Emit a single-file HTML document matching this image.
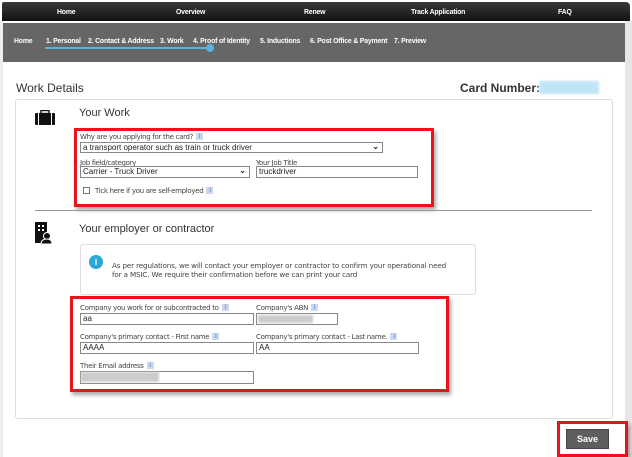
<!DOCTYPE html>
<html><head><style>
*{box-sizing:border-box;margin:0;padding:0}
body{width:632px;height:457px;position:relative;background:#fff;font-family:"Liberation Sans",sans-serif;overflow:hidden}
.a{position:absolute}
.t{font-size:7.5px;color:#fff;font-weight:bold;letter-spacing:-0.2px;white-space:nowrap}
.s{transform:scaleX(0.92);transform-origin:left}
.lbl{position:absolute;font-size:7px;color:#444;white-space:nowrap;font-family:"DejaVu Sans",sans-serif;letter-spacing:-0.3px}
.in{position:absolute;border:1px solid #888;background:#fff;font-size:8px;font-family:"Liberation Sans",sans-serif;color:#222;padding-left:2px;line-height:10px}
.i{display:inline-block;width:7px;height:7px;background:#c9d8ea;color:#36c;font-size:6px;line-height:7px;text-align:center;vertical-align:top;margin-left:3px}
.red{position:absolute;border:3px solid #e8141b;box-shadow:2px 3px 4px rgba(0,0,0,.35)}
.blur{position:absolute;background:#ccc;filter:blur(1px)}
</style></head><body>
<div class="a" style="left:2px;top:2px;width:628px;height:19px;background:linear-gradient(#3a3a3a,#111);border-radius:2px 4px 0 0"></div>
<div class="a t s" style="left:57px;top:7px">Home</div>
<div class="a t s" style="left:176px;top:7px">Overview</div>
<div class="a t s" style="left:304px;top:7px">Renew</div>
<div class="a t s" style="left:411px;top:7px">Track Application</div>
<div class="a t s" style="left:558px;top:7px">FAQ</div>
<div class="a" style="left:625px;top:21px;width:7px;height:436px;background:#e6e6e6"></div>
<div class="a" style="left:0;top:21px;width:3px;height:436px;background:#eee"></div>
<div class="a" style="left:3px;top:23px;width:622px;height:39px;background:#666"></div>
<div class="a t s" style="left:14px;top:36px">Home</div>
<div class="a t s" style="left:46px;top:36px">1. Personal</div>
<div class="a t s" style="left:88px;top:36px">2. Contact &amp; Address</div>
<div class="a t s" style="left:160px;top:36px">3. Work</div>
<div class="a t s" style="left:193px;top:36px">4. Proof of Identity</div>
<div class="a t s" style="left:260px;top:36px">5. Inductions</div>
<div class="a t s" style="left:310px;top:36px">6. Post Office &amp; Payment</div>
<div class="a t s" style="left:394px;top:36px">7. Preview</div>
<div class="a" style="left:45px;top:47px;width:165px;height:2px;background:#5ab2e0"></div>
<div class="a" style="left:206px;top:44px;width:8px;height:8px;border-radius:50%;background:#5ab2e0"></div>
<div class="a" style="left:16px;top:81px;font-size:12px;color:#333">Work Details</div>
<div class="a" style="left:460px;top:81px;font-size:12px;color:#333;font-weight:bold">Card Number:</div>
<div class="a" style="left:539px;top:81px;width:60px;height:13px;background:#bfe6f7;filter:blur(1px)"></div>
<div class="a" style="left:15px;top:99px;width:598px;height:320px;border:1px solid #ddd;border-radius:3px"></div>
<svg class="a" style="left:35px;top:110px" width="20" height="16" viewBox="0 0 20 16"><rect x="6" y="0.5" width="8" height="3" fill="none" stroke="#111" stroke-width="1.4"/><rect x="0" y="3" width="20" height="12" rx="1" fill="#111"/><rect x="3" y="3" width="1" height="12" fill="#fff"/><rect x="16" y="3" width="1" height="12" fill="#fff"/></svg>
<div class="a" style="left:79px;top:107px;font-size:11px;color:#333">Your Work</div>
<div class="red" style="left:74px;top:128px;width:360px;height:79px"></div>
<div class="lbl" style="left:80px;top:133px">Why are you applying for the card?<span class="i">i</span></div>
<div class="in" style="left:80px;top:142px;width:303px;height:11px">a transport operator such as train or truck driver<span style="position:absolute;right:3px;top:-1px;font-weight:bold">⌄</span></div>
<div class="lbl" style="left:80px;top:159px">Job field/category</div>
<div class="lbl" style="left:256px;top:159px">Your Job Title</div>
<div class="in" style="left:80px;top:166px;width:170px;height:12px">Carrier - Truck Driver<span style="position:absolute;right:3px;top:-1px;font-weight:bold">⌄</span></div>
<div class="in" style="left:256px;top:166px;width:162px;height:12px">truckdriver</div>
<div class="a" style="left:83px;top:187px;width:7px;height:7px;border:1px solid #777"></div>
<div class="lbl" style="left:95px;top:187px">Tick here if you are self-employed<span class="i">i</span></div>
<div class="a" style="left:35px;top:210px;width:557px;height:1px;background:#999"></div>
<svg class="a" style="left:35px;top:222px" width="17" height="22" viewBox="0 0 17 22"><rect x="0" y="0" width="12" height="21" fill="#111"/><rect x="3" y="3" width="2" height="2" fill="#fff"/><rect x="7" y="3" width="2" height="2" fill="#fff"/><rect x="3" y="7" width="2" height="2" fill="#fff"/><rect x="7" y="7" width="2" height="2" fill="#fff"/><circle cx="12" cy="14" r="3.5" fill="#111" stroke="#fff" stroke-width="1"/><path d="M6 22 Q6 17 12 17 Q17 17 17 22Z" fill="#111" stroke="#fff" stroke-width="1"/></svg>
<div class="a" style="left:79px;top:223px;font-size:11px;color:#333">Your employer or contractor</div>
<div class="a" style="left:80px;top:244px;width:396px;height:51px;border:1px solid #ddd;border-radius:3px"></div>
<div class="a" style="left:89px;top:255px;width:14px;height:14px;border-radius:50%;background:#2aa6d8;color:#fff;font-size:9px;font-weight:bold;text-align:center;line-height:14px">i</div>
<div class="a" style="left:112px;top:261px;font-size:7.2px;color:#444;line-height:9px;font-family:'DejaVu Sans',sans-serif;letter-spacing:-0.15px;white-space:nowrap">As per regulations, we will contact your employer or contractor to confirm your operational need<br>for a MSIC. We require their confirmation before we can print your card</div>
<div class="red" style="left:70px;top:296px;width:379px;height:96px"></div>
<div class="lbl" style="left:80px;top:304px">Company you work for or subcontracted to<span class="i">i</span></div>
<div class="lbl" style="left:256px;top:304px">Company's ABN<span class="i">i</span></div>
<div class="in" style="left:80px;top:313px;width:174px;height:12px">aa</div>
<div class="in" style="left:256px;top:313px;width:82px;height:12px"></div>
<div class="blur" style="left:258px;top:315px;width:55px;height:8px"></div>
<div class="lbl" style="left:80px;top:333px">Company's primary contact - First name<span class="i">i</span></div>
<div class="lbl" style="left:256px;top:333px">Company's primary contact - Last name.<span class="i">i</span></div>
<div class="in" style="left:80px;top:342px;width:174px;height:12px">AAAA</div>
<div class="in" style="left:256px;top:342px;width:163px;height:12px">AA</div>
<div class="lbl" style="left:80px;top:362px">Their Email address<span class="i">i</span></div>
<div class="in" style="left:80px;top:371px;width:174px;height:13px"></div>
<div class="blur" style="left:81px;top:372px;width:78px;height:10px"></div>
<div class="red" style="left:557px;top:421px;width:71px;height:36px"></div>
<div class="a" style="left:566px;top:429px;width:43px;height:20px;background:#5e5e5e;border:1px solid #444;color:#fff;font-size:9px;font-weight:bold;text-align:center;line-height:18px">Save</div>
</body></html>
